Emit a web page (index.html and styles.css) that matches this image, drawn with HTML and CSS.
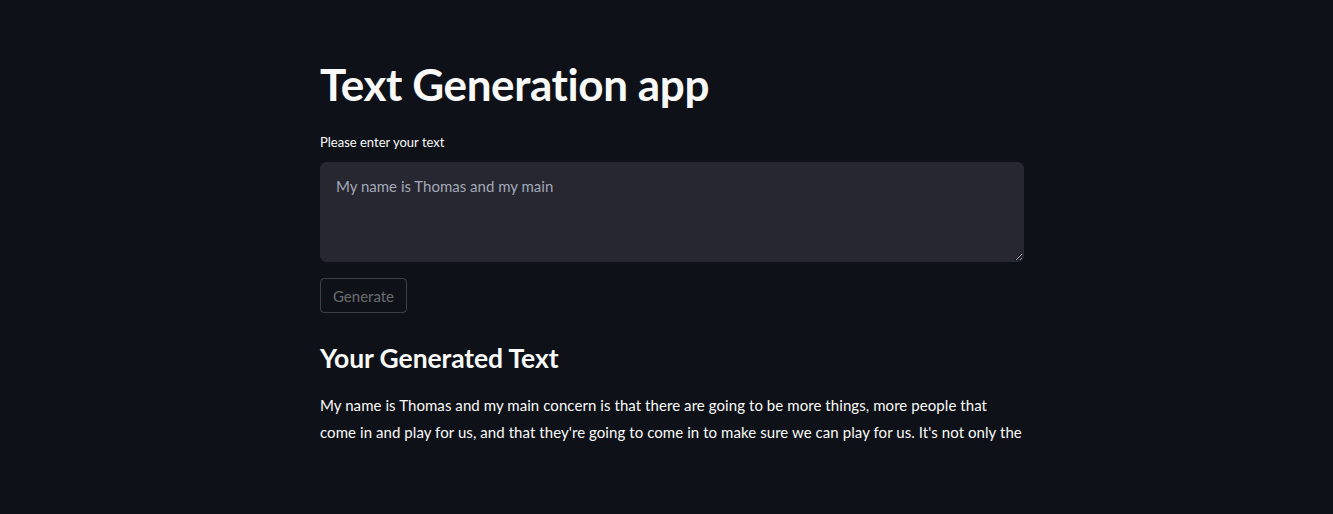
FILE: index.html
```html
<!DOCTYPE html>
<html lang="en">
<head>
<meta charset="utf-8">
<title>Text Generation app</title>
<link rel="stylesheet" href="styles.css">
</head>
<body>
<main class="app">
  <section class="block">
    <h1 class="title">Text Generation app</h1>
    <div class="field">
      <label class="field-label" for="prompt">Please enter your text</label>
      <textarea id="prompt" class="field-input" placeholder="My name is Thomas and my main"></textarea>
    </div>
    <button class="btn" type="button" disabled>Generate</button>
    <h3 class="subtitle">Your Generated Text</h3>
    <p class="output">My name is Thomas and my main concern is that there are going to be more things, more people that come in and play for us, and that they're going to come in to make sure we can play for us. It's not only the</p>
  </section>
</main>
</body>
</html>
```
FILE: styles.css
```css
html, body {
  margin: 0;
  padding: 0;
  background: #0e1117;
  color: #fafafa;
  font-family: Lato, "Noto Sans", sans-serif;
}

.app {
  display: flex;
  justify-content: center;
  min-height: 514px;
  padding-left: 11px;
}

.block {
  width: 704px;
  padding-top: 56px;
  display: flex;
  flex-direction: column;
}

.title {
  margin: 0;
  font-size: 44px;
  font-weight: 700;
  line-height: 56px;
  letter-spacing: -0.4px;
}

.field {
  display: flex;
  flex-direction: column;
  margin-top: 20px;
}

.field-label {
  font-size: 13px;
  line-height: 20px;
  margin-bottom: 10px;
}

.field-input {
  box-sizing: border-box;
  height: 100px;
  width: 100%;
  background: #262730;
  border: 1px solid #262730;
  border-radius: 6px;
  padding: 12px 15px;
  font: inherit;
  font-size: 15px;
  line-height: 22px;
  color: #fafafa;
  resize: vertical;
  outline: none;
}

.field-input::placeholder {
  color: #a3a8b8;
  opacity: 1;
}

.btn {
  align-self: flex-start;
  margin-top: 16px;
  height: 35px;
  padding: 0 12px;
  background: transparent;
  border: 1px solid rgba(250, 250, 250, 0.2);
  border-radius: 4px;
  font: inherit;
  font-size: 15px;
  color: rgba(250, 250, 250, 0.4);
}

.subtitle {
  margin: 27px 0 0;
  font-size: 26.5px;
  font-weight: 700;
  line-height: 36px;
  letter-spacing: -0.1px;
}

.output {
  margin: 16px 0 0;
  font-size: 15px;
  line-height: 27px;
  letter-spacing: 0.07px;
}
```
